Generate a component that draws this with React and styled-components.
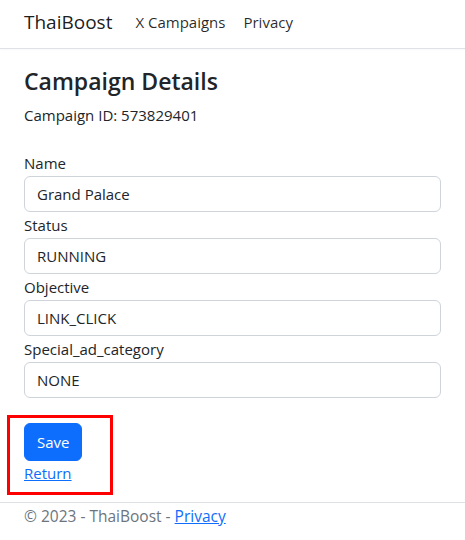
import styled, { createGlobalStyle } from "styled-components";

const GlobalStyle = createGlobalStyle`
  body {
    margin: 0;
    font-family: "Open Sans", "Noto Sans", Arial, sans-serif;
    color: #212529;
    background: #fff;
  }
`;

const NavBar = styled.nav`
  display: flex;
  align-items: center;
  box-sizing: border-box;
  height: 49px;
  padding: 0 24px 5px;
  border-bottom: 1px solid #dee2e6;
  box-shadow: 0 1px 2px rgba(0, 0, 0, 0.03);
`;

const Brand = styled.a`
  font-size: 19px;
  color: rgba(0, 0, 0, 0.9);
  text-decoration: none;
  margin-right: 23px;
`;

const NavLink = styled.a`
  font-size: 15px;
  color: rgba(0, 0, 0, 0.85);
  text-decoration: none;
  margin-right: 18px;
`;

const Main = styled.main`
  padding: 19px 24px 7px;
`;

const Title = styled.h3`
  font-size: 23px;
  font-weight: 600;
  line-height: 1.2;
  margin: 0 0 7px;
`;

const Meta = styled.p`
  font-size: 15px;
  line-height: 24px;
  margin: 0 0 23px;
`;

const Field = styled.div`
  display: flex;
  flex-direction: column;
`;

const Label = styled.label`
  font-size: 15px;
  line-height: 26px;
`;

const Input = styled.input`
  box-sizing: border-box;
  height: 36px;
  width: 100%;
  padding: 0 12px;
  font-family: inherit;
  font-size: 15px;
  color: #212529;
  border: 1px solid #ced4da;
  border-radius: 6px;
`;

const Actions = styled.div`
  box-sizing: border-box;
  width: 106px;
  margin: 17px 0 0 -17px;
  padding: 5px 0 7px 14px;
  border: 3px solid #ff0000;
  display: flex;
  flex-direction: column;
  align-items: flex-start;
`;

const Button = styled.button`
  height: 38px;
  padding: 0 12px;
  font-family: inherit;
  font-size: 15px;
  color: #fff;
  background: #0d6efd;
  border: 1px solid #0d6efd;
  border-radius: 6px;
`;

const Link = styled.a`
  font-size: inherit;
  line-height: 24px;
  color: #0d6efd;
  text-decoration: underline;
`;

const ReturnLink = styled(Link)`
  font-size: 15px;
`;

const Footer = styled.footer`
  border-top: 1px solid #dee2e6;
  padding: 0 24px;
  font-size: 15.5px;
  line-height: 26px;
  color: #6c757d;
`;

const fields = [
  { label: "Name", value: "Grand Palace" },
  { label: "Status", value: "RUNNING" },
  { label: "Objective", value: "LINK_CLICK" },
  { label: "Special_ad_category", value: "NONE" },
];

export default function App() {
  return (
    <>
      <GlobalStyle />
      <NavBar>
        <Brand href="#">ThaiBoost</Brand>
        <NavLink href="#">X Campaigns</NavLink>
        <NavLink href="#">Privacy</NavLink>
      </NavBar>
      <Main>
        <Title>Campaign Details</Title>
        <Meta>Campaign ID: 573829401</Meta>
        {fields.map((f) => (
          <Field key={f.label}>
            <Label>{f.label}</Label>
            <Input defaultValue={f.value} />
          </Field>
        ))}
        <Actions>
          <Button>Save</Button>
          <ReturnLink href="#">Return</ReturnLink>
        </Actions>
      </Main>
      <Footer>
        &copy; 2023 - ThaiBoost - <Link href="#">Privacy</Link>
      </Footer>
    </>
  );
}
